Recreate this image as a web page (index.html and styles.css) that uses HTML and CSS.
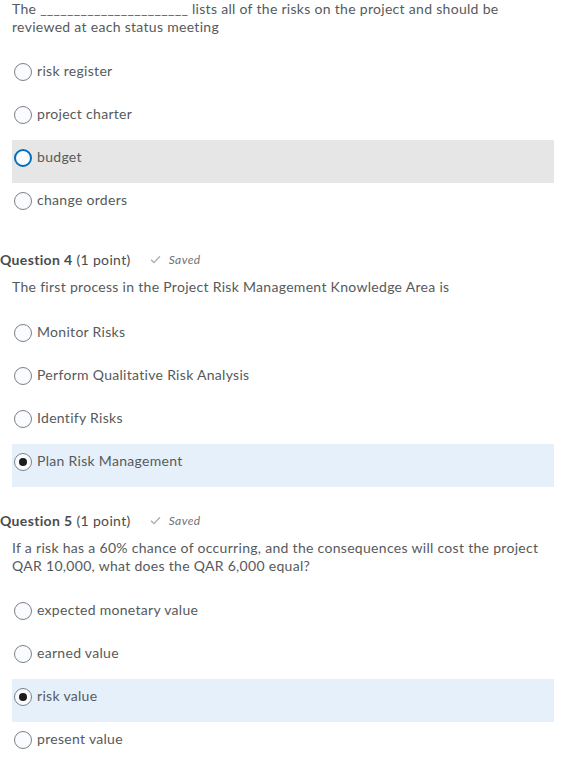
FILE: index.html
```html
<!DOCTYPE html>
<html>
<head>
<meta charset="utf-8">
<link rel="stylesheet" href="styles.css">
</head>
<body>
<div class="question first">
  <div class="prompt">The ______________________ lists all of the risks on the project and should be reviewed at each status meeting</div>
  <div class="options">
    <div class="option"><span class="radio"></span><span class="label">risk register</span></div>
    <div class="option"><span class="radio"></span><span class="label">project charter</span></div>
    <div class="option hover"><span class="radio focus"></span><span class="label">budget</span></div>
    <div class="option"><span class="radio"></span><span class="label">change orders</span></div>
  </div>
</div>

<div class="question">
  <div class="heading"><span class="qtitle"><b>Question 4</b> (1 point)</span><span class="saved"><svg width="11" height="9" viewBox="0 0 11 9"><path d="M1 4.8 L4 7.6 L10 1.2" fill="none" stroke="#a9adb0" stroke-width="1.3"/></svg><i>Saved</i></span></div>
  <div class="prompt">The first process in the Project Risk Management Knowledge Area is</div>
  <div class="options one-line">
    <div class="option"><span class="radio"></span><span class="label">Monitor Risks</span></div>
    <div class="option"><span class="radio"></span><span class="label">Perform Qualitative Risk Analysis</span></div>
    <div class="option"><span class="radio"></span><span class="label">Identify Risks</span></div>
    <div class="option selected"><span class="radio checked"></span><span class="label">Plan Risk Management</span></div>
  </div>
</div>

<div class="question">
  <div class="heading"><span class="qtitle"><b>Question 5</b> (1 point)</span><span class="saved"><svg width="11" height="9" viewBox="0 0 11 9"><path d="M1 4.8 L4 7.6 L10 1.2" fill="none" stroke="#a9adb0" stroke-width="1.3"/></svg><i>Saved</i></span></div>
  <div class="prompt">If a risk has a 60% chance of occurring, and the consequences will cost the project QAR 10,000, what does the QAR 6,000 equal?</div>
  <div class="options">
    <div class="option"><span class="radio"></span><span class="label">expected monetary value</span></div>
    <div class="option"><span class="radio"></span><span class="label">earned value</span></div>
    <div class="option selected"><span class="radio checked"></span><span class="label">risk value</span></div>
    <div class="option"><span class="radio"></span><span class="label">present value</span></div>
  </div>
</div>
</body>
</html>
```
FILE: styles.css
```css
html, body {
  margin: 0;
  padding: 0;
  background: #ffffff;
}
body {
  font-family: Lato, "Open Sans", sans-serif;
  font-size: 14px;
  letter-spacing: 0.3px;
  color: #565a5c;
  width: 569px;
}
.question {
  display: flex;
  flex-direction: column;
  margin-top: 23px;
}
.question.first {
  margin-top: 0;
}
.heading {
  display: flex;
  align-items: center;
  height: 20px;
  font-size: 14px;
  letter-spacing: 0.35px;
  color: #494c4e;
  margin-bottom: 9px;
}
.heading b {
  font-weight: 700;
}
.saved {
  display: flex;
  align-items: center;
  gap: 8px;
  margin-left: 19px;
  font-size: 12px;
  letter-spacing: 0.4px;
  color: #6e7376;
}
.saved svg {
  display: block;
}
.prompt {
  padding-left: 12px;
  line-height: 18px;
  width: 530px;
}
.options {
  display: flex;
  flex-direction: column;
  margin-top: 18px;
}
.options.one-line {
  margin-top: 19px;
}
.option {
  display: flex;
  align-items: flex-start;
  box-sizing: border-box;
  height: 43px;
  margin-left: 12px;
  width: 542px;
  padding: 8px 0 0 2px;
  gap: 5px;
}
.option.hover {
  background: #e6e6e6;
}
.option.selected {
  background: #e6f0fb;
}
.label {
  line-height: 18px;
}
.radio {
  position: relative;
  box-sizing: border-box;
  width: 18px;
  height: 18px;
  border-radius: 50%;
  border: 1px solid #7c8186;
  background: #f9fbff;
  margin-top: 1px;
  flex: none;
}
.radio.focus {
  border: 2px solid #006fbf;
}
.radio.checked::after {
  content: "";
  position: absolute;
  left: 4px;
  top: 4px;
  width: 8px;
  height: 8px;
  border-radius: 50%;
  background: #1c1c1c;
}
```
